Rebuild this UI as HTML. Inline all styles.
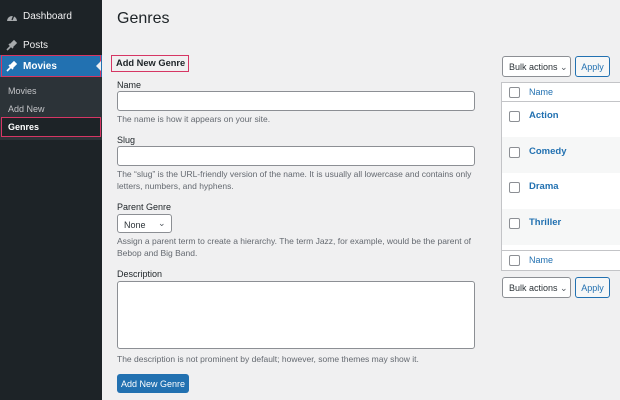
<!DOCTYPE html>
<html><head><style>
*{margin:0;padding:0;box-sizing:border-box}
body{width:620px;height:400px;overflow:hidden;background:#f0f0f1;font-family:"Liberation Sans",sans-serif;color:#3c434a;position:relative;font-size:9px}
.a{position:absolute;white-space:nowrap}
#side{position:absolute;left:0;top:0;width:102px;height:400px;background:#1d2327}
.m{color:#f0f0f1;font-size:10px}
.inp{position:absolute;background:#fff;border:1px solid #8c8f94;border-radius:3px}
.help{color:#646970;font-size:8.5px}
.lbl{color:#1d2327;font-size:9px}
.sel{position:absolute;background:#fff;border:1px solid #8c8f94;border-radius:3px;font-size:9px;color:#2c3338;padding:5px 0 0 6px}
.btn2{position:absolute;background:#f6f7f7;border:1px solid #2271b1;border-radius:3px;color:#2271b1;font-size:9px;text-align:center;padding-top:5px}
.cb{position:absolute;left:509px;width:11px;height:11px;border:1px solid #8c8f94;border-radius:2px;background:#fff}
.lnk{color:#2271b1;font-size:9.5px}
</style></head><body>
<div id="side">
 <div style="position:absolute;left:0;top:55px;width:102px;height:22px;background:#2271b1"></div>
 <div style="position:absolute;left:0;top:77px;width:102px;height:63px;background:#2c3338"></div>
 <div style="position:absolute;left:1px;top:55px;width:100px;height:22px;border:1.5px solid #d63664"></div>
 <div style="position:absolute;left:1px;top:117px;width:100px;height:20px;border:1.5px solid #d63664;background:#1d2327"></div>
 <div style="position:absolute;left:96px;top:61px;width:0;height:0;border-top:5px solid transparent;border-bottom:5px solid transparent;border-right:5px solid #f0f0f1"></div>
 <svg class="a" style="left:6px;top:11px" width="12" height="11" viewBox="0 0 12 11"><path d="M1 10A5 5 0 1 1 11 10Z" fill="#a7aaad"/><path d="M6 9L8 4" stroke="#1d2327" stroke-width="1.3"/></svg>
 <svg class="a" style="left:6px;top:39px" width="12" height="12" viewBox="0 0 12 12"><path d="M1 11L5 7M3 5L7 9M4 6L8 2L10 4L6 8Z" stroke="#a7aaad" stroke-width="1.6" fill="#a7aaad"/></svg>
 <svg class="a" style="left:6px;top:60px" width="12" height="12" viewBox="0 0 12 12"><path d="M1 11L5 7M3 5L7 9M4 6L8 2L10 4L6 8Z" stroke="#fff" stroke-width="1.6" fill="#fff"/></svg>
 <div class="a m" style="left:23px;top:11px">Dashboard</div>
 <div class="a m" style="left:23px;top:40px">Posts</div>
 <div class="a m" style="left:23px;top:61px;color:#fff;font-weight:bold">Movies</div>
 <div class="a" style="left:8px;top:86px;color:#c3c4c7;font-size:9px">Movies</div>
 <div class="a" style="left:8px;top:104px;color:#c3c4c7;font-size:9px">Add New</div>
 <div class="a" style="left:8px;top:122px;color:#fff;font-size:9px;font-weight:bold">Genres</div>
</div>
<div class="a" style="left:117px;top:10px;font-size:16px;color:#1d2327">Genres</div>
<div class="a" style="left:111px;top:55px;width:78px;height:17px;border:1.5px solid #d63664"></div>
<div class="a" style="left:116px;top:58px;font-size:9.3px;font-weight:bold;color:#1d2327">Add New Genre</div>
<div class="a lbl" style="left:117px;top:80px">Name</div>
<div class="inp" style="left:117px;top:91px;width:358px;height:20px"></div>
<div class="a help" style="left:117px;top:114px">The name is how it appears on your site.</div>
<div class="a lbl" style="left:117px;top:135px">Slug</div>
<div class="inp" style="left:117px;top:146px;width:358px;height:20px"></div>
<div class="a help" style="left:117px;top:169px">The “slug” is the URL-friendly version of the name. It is usually all lowercase and contains only</div>
<div class="a help" style="left:117px;top:181px">letters, numbers, and hyphens.</div>
<div class="a lbl" style="left:117px;top:202px">Parent Genre</div>
<div class="sel" style="left:117px;top:214px;width:55px;height:19px">None <span style="position:absolute;left:40px;top:3px;color:#50575e">⌄</span></div>
<div class="a help" style="left:117px;top:236px">Assign a parent term to create a hierarchy. The term Jazz, for example, would be the parent of</div>
<div class="a help" style="left:117px;top:248px">Bebop and Big Band.</div>
<div class="a lbl" style="left:117px;top:269px">Description</div>
<div class="inp" style="left:117px;top:281px;width:358px;height:68px"></div>
<div class="a help" style="left:117px;top:354px">The description is not prominent by default; however, some themes may show it.</div>
<div class="a" style="left:117px;top:374px;width:72px;height:19px;background:#2271b1;border-radius:3px;color:#fff;font-size:9px;text-align:center;padding-top:5px">Add New Genre</div>

<div class="sel" style="left:502px;top:56px;width:69px;height:21px">Bulk actions <span style="color:#50575e">⌄</span></div>
<div class="btn2" style="left:575px;top:56px;width:35px;height:21px">Apply</div>
<div class="a" style="left:501px;top:82px;width:130px;height:189px;background:#fff;border:1px solid #c3c4c7"></div>
<div class="a" style="left:502px;top:101px;width:130px;height:1px;background:#c3c4c7"></div>
<div class="a" style="left:502px;top:137px;width:130px;height:36px;background:#f6f7f7"></div>
<div class="a" style="left:502px;top:209px;width:130px;height:36px;background:#f6f7f7"></div>
<div class="a" style="left:502px;top:250px;width:130px;height:1px;background:#c3c4c7"></div>
<div class="cb" style="top:87px"></div><div class="a lnk" style="left:529px;top:87px;font-size:9px">Name</div>
<div class="cb" style="top:111px"></div><div class="a lnk" style="left:529px;top:110px;font-weight:bold">Action</div>
<div class="cb" style="top:147px"></div><div class="a lnk" style="left:529px;top:146px;font-weight:bold">Comedy</div>
<div class="cb" style="top:182px"></div><div class="a lnk" style="left:529px;top:181px;font-weight:bold">Drama</div>
<div class="cb" style="top:218px"></div><div class="a lnk" style="left:529px;top:217px;font-weight:bold">Thriller</div>
<div class="cb" style="top:255px"></div><div class="a lnk" style="left:529px;top:255px;font-size:9px">Name</div>
<div class="sel" style="left:502px;top:277px;width:69px;height:21px">Bulk actions <span style="color:#50575e">⌄</span></div>
<div class="btn2" style="left:575px;top:277px;width:35px;height:21px">Apply</div>
</body></html>
